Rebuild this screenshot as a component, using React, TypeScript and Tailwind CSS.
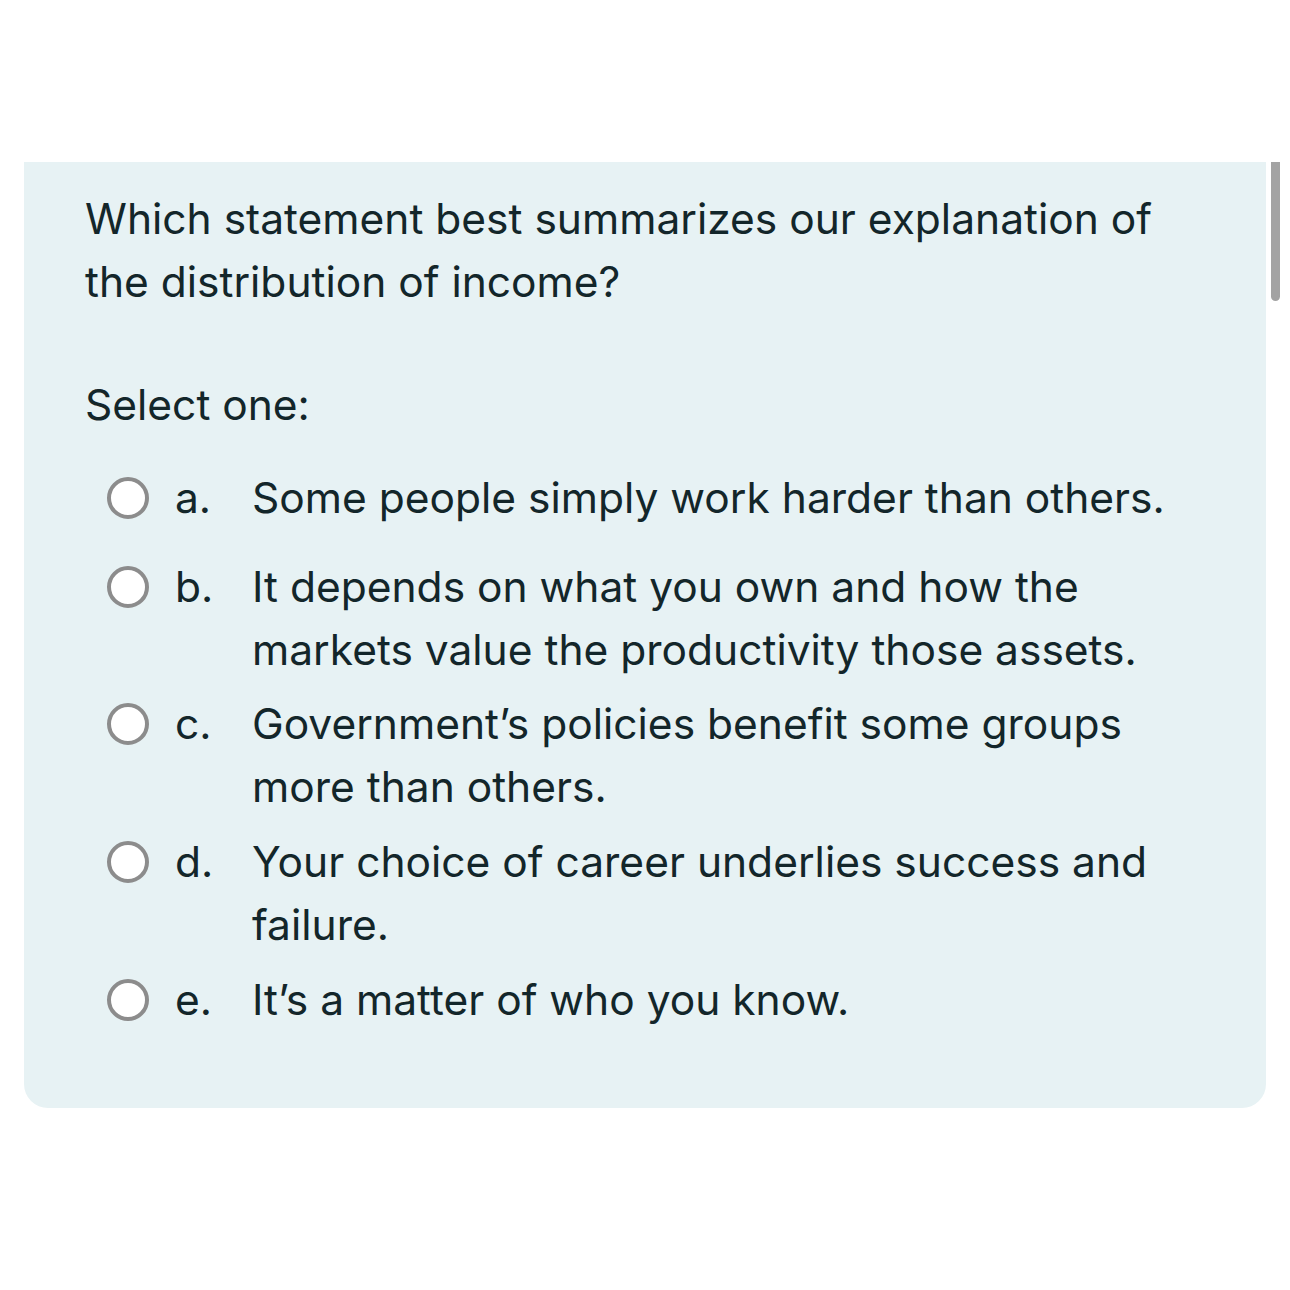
const options = [
  { letter: 'a.', text: 'Some people simply work harder than others.' },
  { letter: 'b.', text: 'It depends on what you own and how the markets value the productivity those assets.' },
  { letter: 'c.', text: 'Government\u2019s policies benefit some groups more than others.' },
  { letter: 'd.', text: 'Your choice of career underlies success and failure.' },
  { letter: 'e.', text: 'It\u2019s a matter of who you know.' },
];

const gaps = ['mt-0', 'mt-[26px]', 'mt-[11px]', 'mt-[12px]', 'mt-[12px]'];

export default function App() {
  return (
    <div className="relative h-[1290px] w-[1290px] bg-white pt-[162px] font-['Inter',sans-serif] text-[#13262a]">
      <div className="absolute left-[1271px] top-[162px] h-[139px] w-[9px] rounded-b-full bg-[#a3a3a3]" />
      <div className="ml-[24px] w-[1242px] rounded-b-[24px] bg-[#e7f2f4] pb-[77px] pl-[61px] pr-[66px] pt-[25px]">
        <p className="text-[42.5px] leading-[63px]">
          Which statement best summarizes our explanation of the distribution of income?
        </p>
        <p className="mt-[60px] text-[42.5px] leading-[63px]">Select one:</p>
        <div className="mt-[30px]">
          {options.map((o, i) => (
            <div key={o.letter} className={`flex items-start ${gaps[i]}`}>
              <div className="ml-[22px] mt-[11px] h-[42px] w-[42px] shrink-0 rounded-full border-[4px] border-[#8c8c8c] bg-white" />
              <span className="ml-[26px] w-[77px] shrink-0 text-[42.5px] leading-[63px]">{o.letter}</span>
              <span className="max-w-[948px] text-[42.5px] leading-[63px]">{o.text}</span>
            </div>
          ))}
        </div>
      </div>
    </div>
  );
}
